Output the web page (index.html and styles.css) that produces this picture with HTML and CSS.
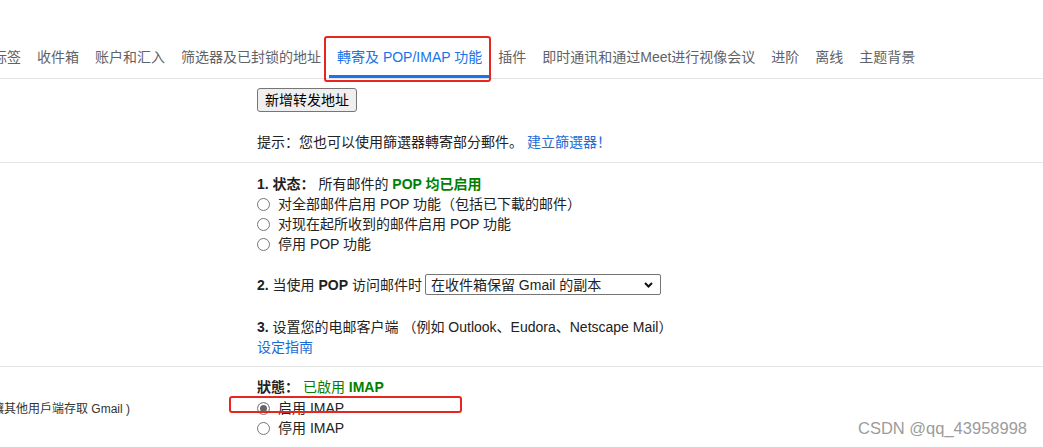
FILE: index.html
```html
<!DOCTYPE html>
<html lang="zh-CN">
<head>
<meta charset="utf-8">
<title>设置</title>
<link rel="stylesheet" href="styles.css">
</head>
<body>
<div class="page">
  <nav class="tabs">
    <a class="tab">标签</a>
    <a class="tab">收件箱</a>
    <a class="tab">账户和汇入</a>
    <a class="tab">筛选器及已封锁的地址</a>
    <a class="tab active">轉寄及 POP/IMAP 功能</a>
    <a class="tab">插件</a>
    <a class="tab">即时通讯和通过Meet进行视像会议</a>
    <a class="tab">进阶</a>
    <a class="tab">离线</a>
    <a class="tab">主题背景</a>
  </nav>

  <div class="settings">
    <section class="row row-fwd">
      <div class="label"></div>
      <div class="value">
        <button class="btn" type="button">新增转发地址</button>
        <p class="tip">提示：您也可以使用篩選器轉寄部分郵件。 <a class="link">建立篩選器！</a></p>
      </div>
    </section>

    <section class="row row-pop">
      <div class="label"></div>
      <div class="value">
        <div class="line"><b>1. 状态：</b> 所有邮件的 <b class="ok">POP 均已启用</b></div>
        <label class="opt"><input type="radio" name="pop">对全部邮件启用 POP 功能（包括已下載的邮件）</label>
        <label class="opt"><input type="radio" name="pop">对现在起所收到的邮件启用 POP 功能</label>
        <label class="opt"><input type="radio" name="pop">停用 POP 功能</label>
        <div class="sec2"><span><b>2.</b> 当使用 <b>POP</b> 访问邮件时</span>
          <span class="select-wrap">
            <select class="select"><option>在收件箱保留 Gmail 的副本</option></select>
            <svg class="chev" width="9" height="6" viewBox="0 0 9 6"><path d="M1 1l3.5 3.5L8 1" fill="none" stroke="#111" stroke-width="2"/></svg>
          </span>
        </div>
        <div class="sec3"><b>3.</b> 设置您的电邮客户端 （例如 Outlook、Eudora、Netscape Mail）</div>
        <a class="link line">设定指南</a>
      </div>
    </section>

    <section class="row row-imap">
      <div class="label"><span class="sub">讓其他用戶端存取 Gmail )</span></div>
      <div class="value">
        <div class="line"><b>狀態：</b> <span class="ok">已啟用 <b>IMAP</b></span></div>
        <label class="opt first"><input type="radio" name="imap" checked>启用 IMAP</label>
        <label class="opt"><input type="radio" name="imap">停用 IMAP</label>
      </div>
    </section>
  </div>

  <div class="mark mark-tab"></div>
  <div class="mark mark-imap"></div>
  <div class="watermark">CSDN @qq_43958998</div>
</div>
</body>
</html>
```

FILE: styles.css
```css
* { box-sizing: border-box; }
html, body { margin: 0; background: #fff; }
body {
  font-family: "Liberation Sans", "Noto Sans CJK SC", sans-serif;
  font-size: 14px;
  color: #222;
}
.page {
  position: relative;
  width: 1043px;
  height: 447px;
  overflow: hidden;
}

/* tabs */
.tabs {
  display: flex;
  margin: 36px 0 0 -15px;
  border-bottom: 1px solid #e4e4e4;
  white-space: nowrap;
}
.tab {
  padding: 11px 8px 8px;
  line-height: 20px;
  color: #5f6368;
  border-bottom: 3px solid transparent;
  text-decoration: none;
}
.tab.active {
  color: #1a73e8;
  border-bottom-color: #1a73e8;
}

/* settings rows */
.settings { margin-left: -20px; }
.row {
  display: grid;
  grid-template-columns: 277px 1fr;
  border-bottom: 1px solid #e4e4e4;
  line-height: 20px;
}
.row:last-child { border-bottom: 0; }
.value { display: flex; flex-direction: column; align-items: flex-start; }

.row-fwd { padding: 9px 0 10px; }
.row-pop { padding: 11px 0 9px; }
.row-imap { padding: 10px 0 0; }

.btn {
  font: inherit;
  font-size: 14px;
  line-height: 20px;
  height: 24px;
  padding: 1px 7px;
  color: #000;
  background: #efefef;
  border: 1px solid #767676;
  border-radius: 3px;
}
.tip { margin: 20px 0 0; }
.link { color: #1a6ed8; text-decoration: none; }
.ok { color: #008000; }
b { font-weight: bold; }

.opt {
  display: flex;
  align-items: center;
  height: 20px;
}
.opt.first { margin-top: 1px; }
.opt input {
  appearance: none;
  -webkit-appearance: none;
  width: 13px;
  height: 13px;
  margin: 0 8px 0 0;
  border: 1px solid #767676;
  border-radius: 50%;
  background: #fff;
}
.opt input:checked {
  border-color: #8a8a8a;
  background: #666;
  box-shadow: inset 0 0 0 2px #fff;
}

.sec2 {
  display: flex;
  align-items: center;
  height: 21px;
  margin-top: 20px;
}
.select-wrap {
  position: relative;
  display: inline-flex;
  margin-left: 3px;
}
.select {
  appearance: none;
  -webkit-appearance: none;
  width: 236px;
  height: 21px;
  padding: 0 20px 0 5px;
  font: inherit;
  font-size: 14px;
  color: #222;
  background: #fff;
  border: 1px solid #767676;
  border-radius: 2px;
}
.chev {
  position: absolute;
  right: 8px;
  top: 8px;
  pointer-events: none;
}
.sec3 { margin-top: 22px; }

.label { padding-left: 15px; }
.row-imap .label { padding-top: 21px; }
.sub { font-size: 12px; color: #333; margin-left: -3px; }

/* annotations */
.mark {
  position: absolute;
  border: 2px solid #e8261f;
  border-radius: 3px;
}
.mark-tab { left: 324px; top: 36px; width: 167px; height: 46px; }
.mark-imap { left: 229px; top: 396px; width: 233px; height: 17px; }

.watermark {
  position: absolute;
  left: 858px;
  top: 418px;
  font-size: 16.5px;
  line-height: 20px;
  color: #9c9c9c;
  white-space: nowrap;
}
```
